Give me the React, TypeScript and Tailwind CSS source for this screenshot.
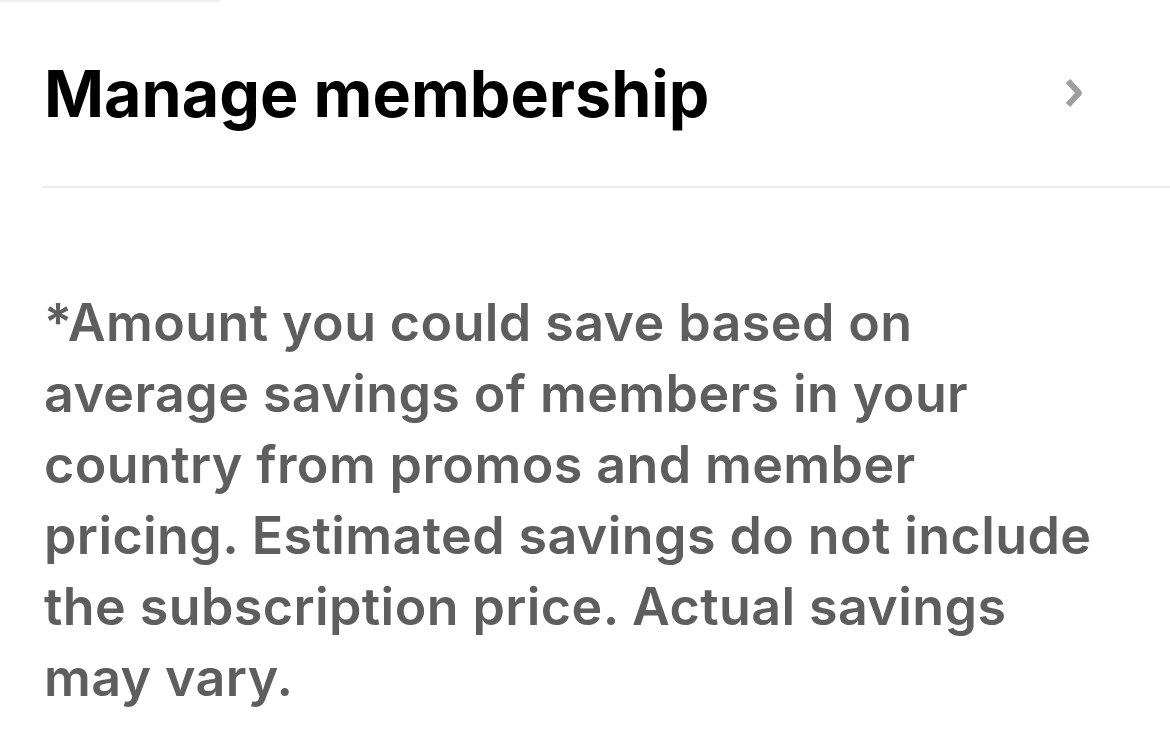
import React from "react";

const lines = [
  "*Amount you could save based on",
  "average savings of members in your",
  "country from promos and member",
  "pricing. Estimated savings do not include",
  "the subscription price. Actual savings",
  "may vary.",
];

export default function App() {
  return (
    <div className="min-h-[753px] w-full bg-white font-['Inter',sans-serif]">
      <div className="h-[2px] w-[220px] bg-[#f0f0f0]" />
      <div className="pl-[42px]">
        <div className="flex h-[186px] items-center justify-between border-b-2 border-[#ececec] pr-[86px]">
          <h1 className="pl-[2px] text-[64.5px] font-bold text-black">Manage membership</h1>
          <svg width="20" height="30" viewBox="0 0 20 30" className="mb-[2px] text-[#9e9e9e]">
            <path d="M4 3 L15 15 L4 27" fill="none" stroke="currentColor" strokeWidth="6" strokeLinejoin="round" />
          </svg>
        </div>
        <p className="pt-[99px] pl-[2px] text-[52px] font-semibold leading-[71px] tracking-[0.4px] text-[#5e5e5e]">
          {lines.map((l, i) => (
            <React.Fragment key={i}>
              {l}
              {i < lines.length - 1 && <br />}
            </React.Fragment>
          ))}
        </p>
      </div>
    </div>
  );
}
